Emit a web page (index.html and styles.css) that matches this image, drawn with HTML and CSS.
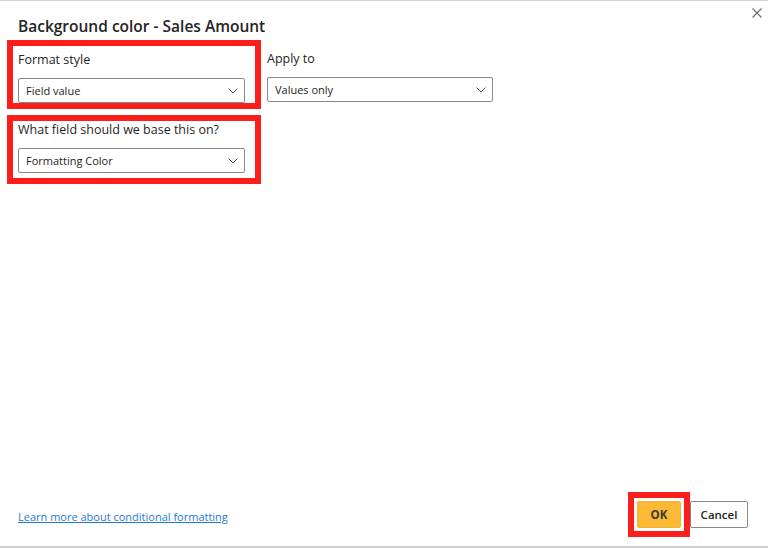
FILE: index.html
```html
<!DOCTYPE html>
<html>
<head>
<meta charset="utf-8">
<link rel="stylesheet" href="styles.css">
</head>
<body>
<div class="dialog">
  <div class="header">
    <h1 class="title">Background color - Sales Amount</h1>
    <button class="close" aria-label="Close">
      <svg width="10" height="10" viewBox="0 0 10 10"><path d="M0.5 0.5 L9.5 9.5 M9.5 0.5 L0.5 9.5" stroke="#6b6b6b" stroke-width="1.1" fill="none"/></svg>
    </button>
  </div>
  <div class="content">
    <div class="col-left">
      <div class="section hl hl-first">
        <div class="label">Format style</div>
        <div class="select"><span>Field value</span><svg class="chev" width="10" height="6" viewBox="0 0 10 6"><polyline points="0.5,0.5 5,5 9.5,0.5" stroke="#555" stroke-width="1" fill="none"/></svg></div>
      </div>
      <div class="section hl hl-second">
        <div class="label">What field should we base this on?</div>
        <div class="select"><span>Formatting Color</span><svg class="chev" width="10" height="6" viewBox="0 0 10 6"><polyline points="0.5,0.5 5,5 9.5,0.5" stroke="#555" stroke-width="1" fill="none"/></svg></div>
      </div>
    </div>
    <div class="col-right">
      <div class="section plain">
        <div class="label">Apply to</div>
        <div class="select"><span>Values only</span><svg class="chev" width="10" height="6" viewBox="0 0 10 6"><polyline points="0.5,0.5 5,5 9.5,0.5" stroke="#555" stroke-width="1" fill="none"/></svg></div>
      </div>
    </div>
  </div>
  <div class="footer">
    <a class="link" href="#">Learn more about conditional formatting</a>
    <div class="buttons">
      <button class="btn btn-ok">OK</button>
      <button class="btn btn-cancel">Cancel</button>
    </div>
  </div>
</div>
</body>
</html>
```
FILE: styles.css
```css
* { box-sizing: border-box; }
html, body { margin: 0; padding: 0; background: #ffffff; }
body { font-family: "Open Sans", "Noto Sans", sans-serif; color: #252423; }

.dialog {
  width: 768px;
  height: 548px;
  border-top: 1px solid #d4d4d4;
  border-bottom: 2px solid #d0d0d0;
  display: flex;
  flex-direction: column;
}

.header {
  display: flex;
  justify-content: space-between;
  align-items: flex-start;
  padding: 0 0 0 18px;
}
.title {
  margin: 14px 0 0 0;
  font-size: 15.5px;
  font-weight: 600;
  line-height: 22px;
  color: #252423;
}
.close {
  margin: 7px 6px 0 0;
  width: 10px;
  height: 10px;
  padding: 0;
  border: 0;
  background: transparent;
  display: flex;
  align-items: center;
  justify-content: center;
}

.content {
  flex: 1;
  display: flex;
  align-items: flex-start;
  gap: 6px;
  padding: 3px 0 0 7px;
}
.col-left {
  width: 254px;
  display: flex;
  flex-direction: column;
  gap: 6px;
}
.col-right { width: 226px; }

.section { display: flex; flex-direction: column; }
.hl { border: 6px solid #fb1e1b; padding: 5px 10px 0 5px; }
.hl-second { padding-top: 0; padding-bottom: 5px; }
.plain { padding-top: 10px; }

.label {
  font-size: 12.5px;
  line-height: 18px;
  color: #252423;
  margin-bottom: 9px;
}
.select {
  height: 25px;
  border: 1px solid #8a8886;
  border-radius: 2px;
  display: flex;
  align-items: center;
  justify-content: space-between;
  padding: 0 6px 0 7px;
  font-size: 11px;
  color: #252423;
  background: #fff;
}
.chev { display: block; }

.footer {
  display: flex;
  justify-content: space-between;
  align-items: center;
  padding: 0 20px 18px 18px;
}
.link {
  font-size: 11px;
  color: #1f7ad4;
  text-decoration: underline;
  margin-top: 3px;
}
.buttons { display: flex; gap: 9px; }
.btn {
  height: 27px;
  font-family: "Open Sans", "Noto Sans", sans-serif;
  font-size: 11.5px;
  border-radius: 2px;
  padding: 0;
}
.btn-ok {
  position: relative;
  width: 44px;
  background: #fbb936;
  border: 1px solid #f5b42f;
  font-weight: 700;
  color: #3b3a39;
}
.btn-ok::after {
  content: "";
  position: absolute;
  top: -10px;
  left: -10px;
  right: -10px;
  bottom: -10px;
  border: 6px solid #fb1e1b;
}
.btn-cancel {
  width: 58px;
  background: #ffffff;
  border: 1px solid #8a8886;
  color: #252423;
  font-weight: 600;
}
```
